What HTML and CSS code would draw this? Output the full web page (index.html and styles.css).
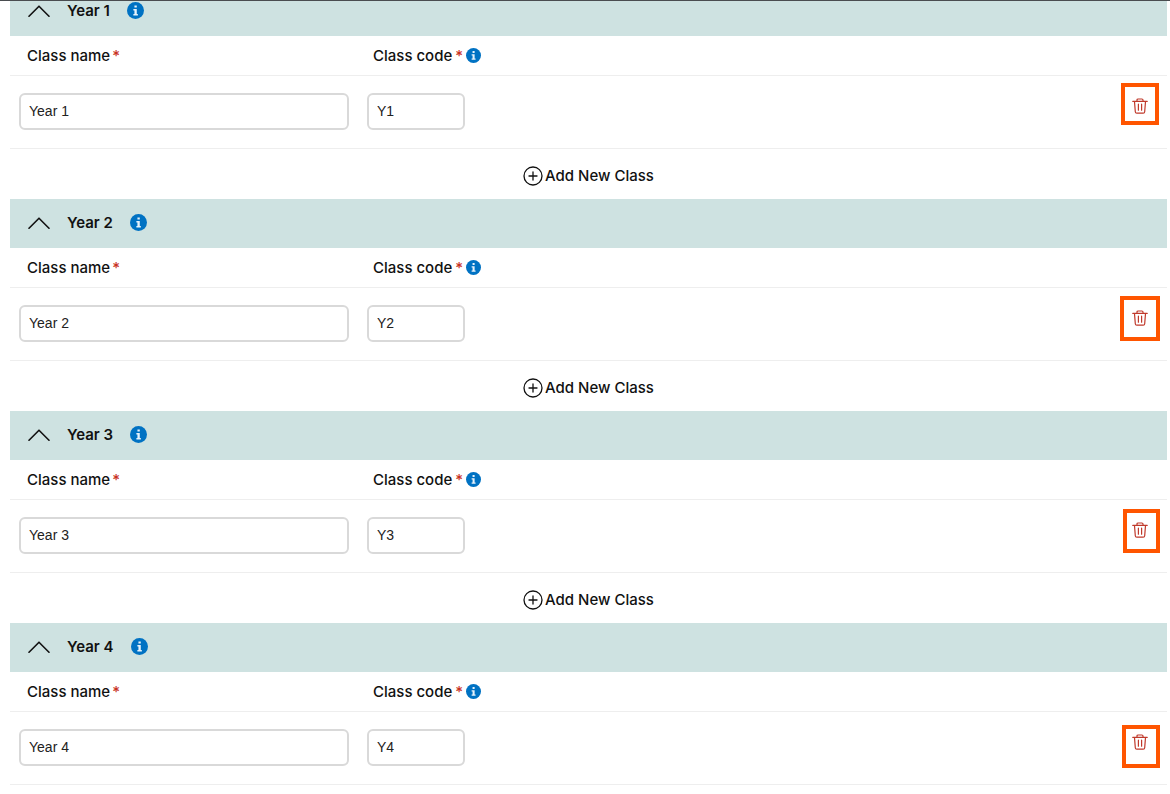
FILE: index.html
```html
<!DOCTYPE html>
<html lang="en">
<head>
<meta charset="utf-8">
<title>Classes</title>
<link rel="stylesheet" href="styles.css">
</head>
<body>
<svg class="sprite" aria-hidden="true">
  <symbol id="chevron" viewBox="0 0 22 12"><path d="M1 11.2 11 1.2 21 11.2" fill="none" stroke="currentColor" stroke-width="1.6" stroke-linecap="round" stroke-linejoin="round"/></symbol>
  <symbol id="info" viewBox="0 0 16 16"><circle cx="8" cy="8" r="8" fill="#0072c3"/><path d="M7 3.2h2.2v2H7zM6 6.6h3.2v4.6h1v1.4H6v-1.4h1V8H6z" fill="#e6f2fb"/></symbol>
  <symbol id="plus" viewBox="0 0 20 20"><circle cx="10" cy="10" r="9" fill="none" stroke="currentColor" stroke-width="1.3"/><path d="M10 6v8M6 10h8" stroke="currentColor" stroke-width="1.3" stroke-linecap="round"/></symbol>
  <symbol id="trash" viewBox="0 0 16 16"><path d="M.8 3.4h14.4M5 3.2V2.1Q5 1 6.100 1h3.800Q11 1 11 2.100v1.100M2.500 3.600l.8 10.200Q3.400 15.200 4.800 15.200h6.400q1.400 0 1.500-1.400l.8-10.200M6.400 6.200v6M9.600 6.200v6" fill="none" stroke="currentColor" stroke-width="1.200" stroke-linecap="round"/></symbol>
</svg>
<main class="page">
  <section class="year">
    <header class="year-header">
      <button class="toggle" aria-label="Collapse Year 1"><svg class="chevron"><use href="#chevron"/></svg></button>
      <h2 class="year-title">Year 1</h2>
      <button class="info" aria-label="About Year 1"><svg class="info-icon"><use href="#info"/></svg></button>
    </header>
    <table class="classes">
      <thead><tr>
        <th class="name-col" id="name1">Class name<span class="required">*</span></th>
        <th class="code-col"><span class="code-label"><span id="code1">Class code<span class="required">*</span></span><button class="info" aria-label="About class code"><svg class="info-icon small"><use href="#info"/></svg></button></span></th>
        <td class="action-col"></td>
      </tr></thead>
      <tbody><tr>
        <td><input class="field" type="text" value="Year 1" aria-labelledby="name1"></td>
        <td><input class="field" type="text" value="Y1" aria-labelledby="code1"></td>
        <td class="action-col"><button class="delete" aria-label="Delete Year 1"><svg class="trash"><use href="#trash"/></svg><span class="marker marker-1"></span></button></td>
      </tr></tbody>
    </table>
    <div class="add-row"><button class="add"><svg class="plus"><use href="#plus"/></svg>Add New Class</button></div>
  </section>
  <section class="year">
    <header class="year-header">
      <button class="toggle" aria-label="Collapse Year 2"><svg class="chevron"><use href="#chevron"/></svg></button>
      <h2 class="year-title">Year 2</h2>
      <button class="info" aria-label="About Year 2"><svg class="info-icon"><use href="#info"/></svg></button>
    </header>
    <table class="classes">
      <thead><tr>
        <th class="name-col" id="name2">Class name<span class="required">*</span></th>
        <th class="code-col"><span class="code-label"><span id="code2">Class code<span class="required">*</span></span><button class="info" aria-label="About class code"><svg class="info-icon small"><use href="#info"/></svg></button></span></th>
        <td class="action-col"></td>
      </tr></thead>
      <tbody><tr>
        <td><input class="field" type="text" value="Year 2" aria-labelledby="name2"></td>
        <td><input class="field" type="text" value="Y2" aria-labelledby="code2"></td>
        <td class="action-col"><button class="delete" aria-label="Delete Year 2"><svg class="trash"><use href="#trash"/></svg><span class="marker marker-2"></span></button></td>
      </tr></tbody>
    </table>
    <div class="add-row"><button class="add"><svg class="plus"><use href="#plus"/></svg>Add New Class</button></div>
  </section>
  <section class="year">
    <header class="year-header">
      <button class="toggle" aria-label="Collapse Year 3"><svg class="chevron"><use href="#chevron"/></svg></button>
      <h2 class="year-title">Year 3</h2>
      <button class="info" aria-label="About Year 3"><svg class="info-icon"><use href="#info"/></svg></button>
    </header>
    <table class="classes">
      <thead><tr>
        <th class="name-col" id="name3">Class name<span class="required">*</span></th>
        <th class="code-col"><span class="code-label"><span id="code3">Class code<span class="required">*</span></span><button class="info" aria-label="About class code"><svg class="info-icon small"><use href="#info"/></svg></button></span></th>
        <td class="action-col"></td>
      </tr></thead>
      <tbody><tr>
        <td><input class="field" type="text" value="Year 3" aria-labelledby="name3"></td>
        <td><input class="field" type="text" value="Y3" aria-labelledby="code3"></td>
        <td class="action-col"><button class="delete" aria-label="Delete Year 3"><svg class="trash"><use href="#trash"/></svg><span class="marker marker-3"></span></button></td>
      </tr></tbody>
    </table>
    <div class="add-row"><button class="add"><svg class="plus"><use href="#plus"/></svg>Add New Class</button></div>
  </section>
  <section class="year">
    <header class="year-header">
      <button class="toggle" aria-label="Collapse Year 4"><svg class="chevron"><use href="#chevron"/></svg></button>
      <h2 class="year-title">Year 4</h2>
      <button class="info" aria-label="About Year 4"><svg class="info-icon"><use href="#info"/></svg></button>
    </header>
    <table class="classes">
      <thead><tr>
        <th class="name-col" id="name4">Class name<span class="required">*</span></th>
        <th class="code-col"><span class="code-label"><span id="code4">Class code<span class="required">*</span></span><button class="info" aria-label="About class code"><svg class="info-icon small"><use href="#info"/></svg></button></span></th>
        <td class="action-col"></td>
      </tr></thead>
      <tbody><tr>
        <td><input class="field" type="text" value="Year 4" aria-labelledby="name4"></td>
        <td><input class="field" type="text" value="Y4" aria-labelledby="code4"></td>
        <td class="action-col"><button class="delete" aria-label="Delete Year 4"><svg class="trash"><use href="#trash"/></svg><span class="marker marker-4"></span></button></td>
      </tr></tbody>
    </table>
  </section>
</main>
</body>
</html>
```
FILE: styles.css
```css
* { box-sizing: border-box; }
body {
  margin: 0;
  background: #fff;
  color: #111;
  font: 500 15px/20px Inter, "Liberation Sans", sans-serif;
}
button {
  display: flex;
  align-items: center;
  padding: 0;
  border: 0;
  background: none;
  color: inherit;
  font: inherit;
  cursor: pointer;
}
svg { display: block; }
.sprite { display: none; }

.page {
  overflow: hidden;
  padding: 0 3px 0 10px;
  border-top: 1px solid #4a4d50;
}
.year:first-child { margin-top: -14px; }
.year-header {
  display: flex;
  align-items: center;
  height: 49px;
  padding: 0 18px 2px;
  background: #cee2e1;
}
.chevron { width: 22px; height: 12px; }
.year-title {
  margin: 0 17px;
  font-size: 15px;
  font-weight: 600;
}
.info-icon { width: 17px; height: 17px; }
.info-icon.small { width: 15px; height: 15px; }

.classes {
  width: 100%;
  border-collapse: separate;
  border-spacing: 0;
  table-layout: fixed;
}
.classes th, .classes td { border-bottom: 1px solid #eee; }
.classes th {
  height: 40px;
  padding: 0 0 0 17px;
  font-weight: 500;
  text-align: left;
}
.classes td { padding: 17px 9px 18px; }
.classes thead td { padding: 0; }
.name-col { width: 348px; }
.code-col { width: 116px; }
.classes .code-col { padding-left: 15px; }
.code-label { display: flex; align-items: center; gap: 3px; white-space: nowrap; }
.required { margin-left: 2px; color: #c8321f; }
.code-col .required { margin-left: 3px; }
.field {
  display: block;
  width: 100%;
  height: 37px;
  padding: 0 8px 2px;
  border: 2px solid #d9d9d9;
  border-radius: 6px;
  background: #fff;
  color: #222;
  font: 14px "Liberation Sans", Arial, sans-serif;
}
.classes tbody .action-col { padding: 14px 11px; vertical-align: top; }
.delete {
  position: relative;
  justify-content: center;
  width: 32px;
  height: 32px;
  margin-left: auto;
  color: #c0392b;
}
.trash { width: 16px; height: 16px; }

/* Highlight frames drawn over the delete buttons */
.marker { position: absolute; border: 4px solid #ff5500; }
.marker-1 { inset: -7px -3px -3px; }
.marker-2 { inset: -6px -4px -7px; }
.marker-3 { inset: -5px -4px -7px -1px; }
.marker-4 { inset: -1px -4px -10px -2px; }

.add-row {
  display: flex;
  justify-content: center;
  height: 50px;
  padding-top: 16px;
}
.add { gap: 2px; height: 22px; }
.plus { width: 20px; height: 20px; }
```
